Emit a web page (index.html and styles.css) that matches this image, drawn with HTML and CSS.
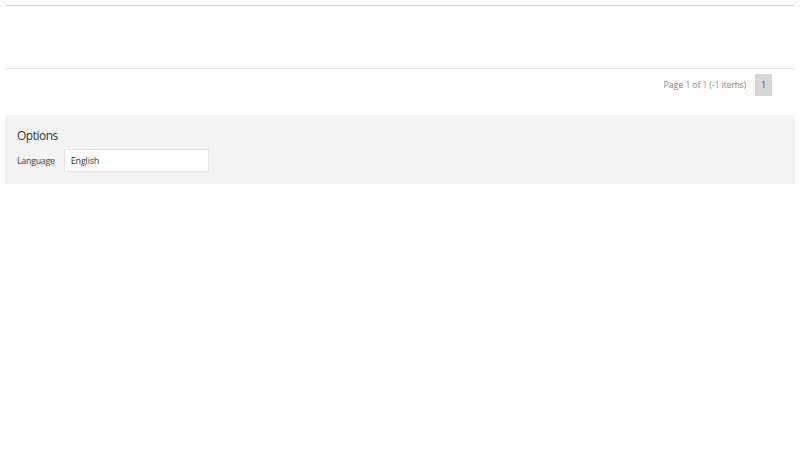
FILE: index.html
```html
<!DOCTYPE html>
<html lang="en">
<head>
<meta charset="utf-8">
<title>Grid</title>
<link rel="stylesheet" href="styles.css">
</head>
<body>
<div class="page">
  <div class="grid">
    <div class="grid-header"></div>
    <div class="grid-body"></div>
    <div class="pager">
      <span class="pager-summary">Page 1 of 1 (-1 items)</span>
      <span class="pager-page">1</span>
    </div>
  </div>
  <div class="options">
    <div class="options-title">Options</div>
    <div class="options-row">
      <label class="options-label">Language</label>
      <div class="select">English</div>
    </div>
  </div>
</div>
</body>
</html>
```

FILE: styles.css
```css
html, body {
  margin: 0;
  padding: 0;
  background: #ffffff;
  font-family: "Open Sans", "Noto Sans", sans-serif;
  color: #333333;
}
.page {
  padding: 0 5px;
}
.grid-header {
  height: 5px;
  border-bottom: 1px solid #d2d2d2;
}
.grid-body {
  height: 62px;
  border-bottom: 1px solid #e2e2e2;
}
.pager {
  display: flex;
  justify-content: flex-end;
  align-items: flex-start;
  gap: 9px;
  height: 35px;
  padding: 5px 23px 6px 0;
}
.pager-summary {
  font-size: 9px;
  letter-spacing: -0.22px;
  color: #8a8a8a;
  line-height: 22px;
}
.pager-page {
  display: block;
  width: 17px;
  height: 22px;
  line-height: 22px;
  text-align: center;
  font-size: 9px;
  background: #d6d6d6;
  color: #555555;
}
.options {
  background: #f3f3f3;
  padding: 12px 12px 12px;
  height: 45px;
}
.options-title {
  font-size: 12px;
  letter-spacing: -0.5px;
  line-height: 17px;
  color: #333333;
  margin-bottom: 5px;
}
.options-row {
  display: flex;
  align-items: center;
  gap: 9px;
}
.options-label {
  font-size: 9px;
  letter-spacing: -0.35px;
  color: #444444;
}
.select {
  box-sizing: border-box;
  width: 145px;
  height: 23px;
  line-height: 21px;
  padding: 0 6px;
  background: #ffffff;
  border: 1px solid #e4e4e4;
  font-size: 9px;
  letter-spacing: -0.2px;
  color: #333333;
}
```
